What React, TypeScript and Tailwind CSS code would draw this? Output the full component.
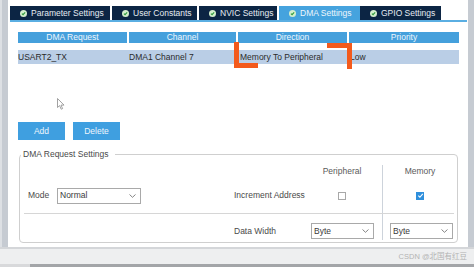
import React from "react";

const font = "font-['Liberation_Sans','Noto_Sans_CJK_SC',Arial,sans-serif]";

function CheckIcon() {
  return (
    <svg width="7" height="7" viewBox="0 0 8 8" className="shrink-0">
      <circle cx="4" cy="4" r="4" fill="#d4efcc" />
      <path d="M2.2 4.1 L3.5 5.4 L5.9 2.8" fill="none" stroke="#2f9a3c" strokeWidth="1.3" />
    </svg>
  );
}

function Tab({ label, w, active }: { label: string; w: string; active?: boolean }) {
  return (
    <div
      className={`${w} h-[14px] flex items-center gap-[4px] pl-[10px] text-[8.5px] leading-none ${
        active ? "bg-[#45a3de] text-[#eef6fc]" : "bg-[#0c2544] text-[#e6ebf2]"
      }`}
    >
      <CheckIcon />
      <span className="whitespace-nowrap">{label}</span>
    </div>
  );
}

function Chevron() {
  return (
    <svg width="7" height="4" viewBox="0 0 7 4" className="shrink-0">
      <path d="M0.5 0.5 L3.5 3.3 L6.5 0.5" fill="none" stroke="#777" strokeWidth="0.9" />
    </svg>
  );
}

function Select({ value, w }: { value: string; w: string }) {
  return (
    <div
      className={`${w} h-[16px] border border-[#a9a9a9] bg-white flex items-center justify-between pl-[2px] pr-[4px] text-[8.5px] text-[#3a3a3a]`}
    >
      <span>{value}</span>
      <Chevron />
    </div>
  );
}

export default function App() {
  return (
    <div className={`w-[474px] h-[267px] flex flex-col bg-white overflow-hidden ${font}`}>
      <div className="h-[247px] flex">
        <div className="w-[8px] bg-[#c6cbd2] border-l-[2px] border-[#dde0e4]" />
        <div className="relative flex-1 flex flex-col bg-white">
          {/* tabs */}
          <div className="mt-[6px] ml-[2px] flex gap-[2px]">
            <Tab label="Parameter Settings" w="w-[100px]" />
            <Tab label="User Constants" w="w-[85px]" />
            <Tab label="NVIC Settings" w="w-[78px]" />
            <Tab label="DMA Settings" w="w-[81px]" active />
            <div className="-ml-[2px]">
              <Tab label="GPIO Settings" w="w-[81px]" />
            </div>
          </div>
          <div className="ml-[2px] mr-[1px] h-[2px] bg-[#5aaee2]" />

          {/* table */}
          <div className="ml-[10px] mt-[10px] w-[441px] grid grid-cols-[109px_107px_109px_110px] gap-x-[2px] text-[8.5px]">
            {["DMA Request", "Channel", "Direction", "Priority"].map((h) => (
              <div key={h} className="h-[11px] bg-[#45a0dc] text-[#eef6fc] flex items-center justify-center leading-none">
                {h}
              </div>
            ))}
          </div>
          <div className="ml-[10px] mt-[7px] w-[441px] h-[14px] bg-[#bacee6] grid grid-cols-[109px_107px_109px_110px] gap-x-[2px] text-[8.5px] text-[#2a2a2a]">
            <div className="flex items-center">USART2_TX</div>
            <div className="flex items-center">DMA1 Channel 7</div>
            <div className="flex items-center pl-[2px]">Memory To Peripheral</div>
            <div className="flex items-center pl-[1px]">Low</div>
          </div>

          {/* buttons */}
          <div className="ml-[10px] mt-[58px] flex gap-[8px]">
            <div className="w-[47px] h-[18px] bg-[#3f9fe0] text-[#eef6fc] text-[8.5px] flex items-center justify-center">Add</div>
            <div className="w-[47px] h-[18px] bg-[#3f9fe0] text-[#eef6fc] text-[8.5px] flex items-center justify-center">Delete</div>
          </div>

          {/* group */}
          <fieldset className="ml-[11px] mt-[9px] w-[439px] border border-[#cfcfcf] rounded-[4px] pb-[2px]">
            <legend className="ml-[1px] pl-[2px] pr-[6px] text-[8.5px] leading-[10px] text-[#4a4a4a]">DMA Request Settings</legend>
            <div className="mt-[6px] grid grid-cols-[213px_69px_81px_74px] text-[8.5px] text-[#4a4a4a]">
              {/* header row */}
              <div className="h-[13px]" />
              <div className="h-[13px]" />
              <div className="h-[13px] border-r border-[#cdd3db] flex items-center justify-center text-[#5a5a5a]">Peripheral</div>
              <div className="h-[13px] flex items-center justify-center text-[#5a5a5a]">Memory</div>
              {/* row 1 */}
              <div className="h-[35px] flex items-center pl-[8px]">
                <span className="w-[29px]">Mode</span>
                <Select value="Normal" w="w-[84px]" />
              </div>
              <div className="h-[35px] flex items-center pl-[1px] whitespace-nowrap">Increment Address</div>
              <div className="h-[35px] border-r border-[#cdd3db] flex items-center justify-center">
                <div className="w-[8px] h-[8px] border border-[#a8a8a8] bg-white" />
              </div>
              <div className="h-[35px] flex items-center justify-center">
                <div className="w-[8px] h-[8px] bg-[#2f8fdc] flex items-center justify-center">
                  <svg width="7" height="7" viewBox="0 0 8 8">
                    <path d="M1.5 4.2 L3.3 6 L6.6 2.2" fill="none" stroke="white" strokeWidth="1.3" />
                  </svg>
                </div>
              </div>
              {/* divider */}
              <div className="col-span-4 relative h-[1px]">
                <div className="absolute left-[4px] right-[3px] top-0 h-[1px] bg-[#d6d6d6]" />
              </div>
              {/* row 2 */}
              <div className="h-[26px]" />
              <div className="h-[26px] flex items-center pt-[8px] pl-[1px] whitespace-nowrap">Data Width</div>
              <div className="h-[26px] border-r border-[#cdd3db] flex items-center pt-[8px] pl-[9px]">
                <Select value="Byte" w="w-[63px]" />
              </div>
              <div className="h-[26px] flex items-center pt-[8px] pl-[7px]">
                <Select value="Byte" w="w-[63px]" />
              </div>
            </div>
          </fieldset>

          {/* annotation brackets */}
          <div className="absolute left-[226px] top-[42px] w-[5px] h-[26px] bg-[#f35a1c]" />
          <div className="absolute left-[226px] top-[63px] w-[24px] h-[5px] bg-[#f35a1c]" />
          <div className="absolute left-[319px] top-[43px] w-[25px] h-[5px] bg-[#f35a1c]" />
          <div className="absolute left-[339px] top-[43px] w-[5px] h-[26px] bg-[#f35a1c]" />

          {/* cursor */}
          <svg className="absolute left-[49px] top-[98px]" width="8" height="12" viewBox="0 0 8 12">
            <path d="M0.5 0.5 L0.5 9.5 L2.6 7.6 L4.2 11.2 L5.6 10.6 L4 7.1 L7 7.1 Z" fill="white" stroke="#8a8a8a" strokeWidth="0.8" />
          </svg>
        </div>
        <div className="w-[6px] bg-[#c6cbd2]" />
      </div>
      <div className="flex-1 flex flex-col bg-[#eeeff0] border-t-[2px] border-[#d4d6d9]">
        <div className="flex-1 flex items-center justify-end pr-[7px] text-[7.5px] text-[#b3b3b3] leading-none">
          CSDN @北国有红豆
        </div>
        <div className="h-[3px] flex">
          <div className="w-[30px] bg-[#d8d9db]" />
          <div className="flex-1 bg-[#a3a5a8]" />
        </div>
      </div>
    </div>
  );
}
